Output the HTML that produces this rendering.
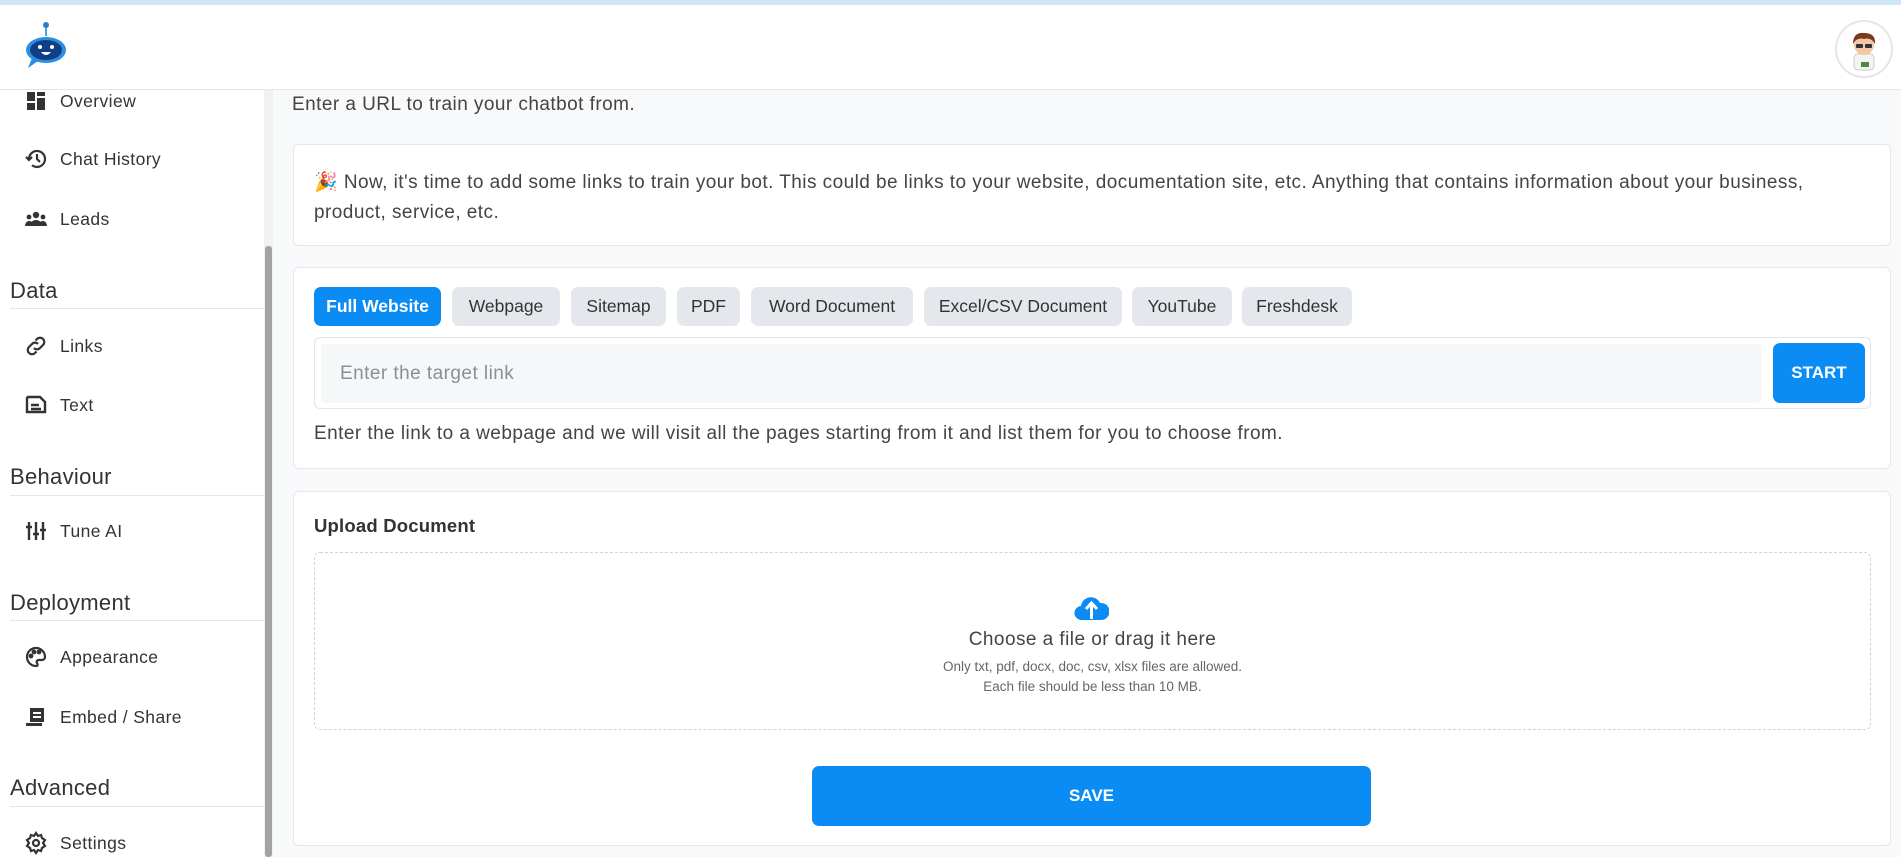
<!DOCTYPE html>
<html><head><meta charset="utf-8">
<style>
*{box-sizing:border-box;margin:0;padding:0}
body{width:1901px;height:857px;overflow:hidden;background:#f8f9fa;font-family:"Liberation Sans",sans-serif;color:#333;position:relative}
.topline{position:absolute;left:0;top:0;width:1901px;height:5px;background:#cfe6f7}
.header{position:absolute;left:0;top:5px;width:1901px;height:85px;background:#fff;border-bottom:1px solid #e5e7eb}
.sidebar{position:absolute;left:0;top:90px;width:264px;height:767px;background:#fff}
.sb-track{position:absolute;left:264px;top:90px;width:9px;height:767px;background:#f1f1f1}
.sb-thumb{position:absolute;left:265px;top:246px;width:7px;height:611px;background:#a3a3a3;border-radius:3px}
.item{position:absolute;left:24px;font-size:17.5px;letter-spacing:0.4px;color:#333;display:flex;align-items:center}
.item svg{width:24px;height:24px;margin-right:12px}
.head{position:absolute;left:10px;font-size:22px;color:#333;letter-spacing:0.3px}
.hline{position:absolute;left:10px;width:254px;height:1px;background:#e5e7eb}
.card{position:absolute;left:293px;width:1598px;background:#fff;border:1px solid #e3e6ea;border-radius:6px}
.tab{position:absolute;top:287px;height:39px;border-radius:7px;background:#e4e7eb;font-size:17.5px;color:#333;display:flex;align-items:center;justify-content:center}
.tab.a{background:#0b8cf5;color:#fff;font-weight:bold}
.t{letter-spacing:0.45px}
</style></head><body>
<div class="topline"></div>
<div class="header">
 <svg style="position:absolute;left:22px;top:15px" width="48" height="52" viewBox="0 0 48 52">
  <line x1="24" y1="4" x2="24" y2="16" stroke="#4aa3e0" stroke-width="2"/>
  <circle cx="24" cy="5" r="3" fill="#2a7fc9"/>
  <ellipse cx="24" cy="30" rx="20" ry="13" fill="#2b8fe0"/>
  <ellipse cx="24" cy="30" rx="16" ry="10" fill="#103f86"/>
  <path d="M10 38 L6 48 L16 41Z" fill="#2b8fe0"/>
  <circle cx="18" cy="27" r="2" fill="#fff"/><circle cx="30" cy="27" r="2" fill="#fff"/>
  <path d="M19 32 Q24 38 29 32Z" fill="#fff"/>
 </svg>
 <div style="position:absolute;left:1835px;top:15px;width:58px;height:58px;border-radius:50%;border:2px solid #e6e6e6;background:#fff;overflow:hidden">
  <svg width="54" height="54" viewBox="0 0 54 54">
   <rect x="17" y="32" width="20" height="16" rx="4" fill="#f3f3f3" stroke="#ccc"/>
   <circle cx="27" cy="23" r="10" fill="#f1c9a5"/>
   <path d="M16 22 Q16 10 27 11 Q39 11 38 22 Q34 15 27 17 Q20 15 16 22Z" fill="#7a3a1c"/>
   <rect x="19" y="22" width="7" height="4" rx="1" fill="#333"/><rect x="28" y="22" width="7" height="4" rx="1" fill="#333"/>
   <rect x="24" y="40" width="8" height="5" fill="#4b8b3b"/>
  </svg>
 </div>
</div>
<div class="sidebar">
 <div class="item" style="top:-1px"><svg viewBox="0 0 24 24"><path d="M3 3h8v9H3zM13 3h8v4h-8zM13 9h8v12h-8zM3 14h8v7H3z" fill="#333"/></svg>Overview</div>
 <div class="item" style="top:57px"><svg viewBox="0 0 24 24" fill="none" stroke="#333" stroke-width="2.2"><path d="M5 12a8 8 0 1 1 3 6.2"/><path d="M2 10l3 3 3-3"/><path d="M13 7v5l3 3"/></svg>Chat History</div>
 <div class="item" style="top:117px"><svg viewBox="0 0 24 24" fill="#333"><circle cx="12" cy="8" r="3.2"/><circle cx="5" cy="10" r="2.4"/><circle cx="19" cy="10" r="2.4"/><path d="M6 19c0-4 3-6 6-6s6 2 6 6z"/><path d="M1 19c0-3 2-5 4-5s3 1 3 1l-2 4z"/><path d="M23 19c0-3-2-5-4-5s-3 1-3 1l2 4z"/></svg>Leads</div>
 <div class="head" style="top:188px">Data</div><div class="hline" style="top:218px"></div>
 <div class="item" style="top:244px"><svg viewBox="0 0 24 24" fill="none" stroke="#333" stroke-width="2.2"><path d="M10 14a4 4 0 0 0 6 0l3-3a4 4 0 0 0-6-6l-1.5 1.5"/><path d="M14 10a4 4 0 0 0-6 0l-3 3a4 4 0 0 0 6 6l1.5-1.5"/></svg>Links</div>
 <div class="item" style="top:303px"><svg viewBox="0 0 24 24" fill="none" stroke="#333" stroke-width="2.4"><path d="M3 5v14h18V9l-5-5H4z"/><path d="M7 12h8M7 16h10"/></svg>Text</div>
 <div class="head" style="top:374px">Behaviour</div><div class="hline" style="top:405px"></div>
 <div class="item" style="top:429px"><svg viewBox="0 0 24 24" fill="none" stroke="#333" stroke-width="2.4"><path d="M5 3v18M12 3v18M19 3v18M2 8h6M9 15h6M16 11h6"/></svg>Tune AI</div>
 <div class="head" style="top:500px">Deployment</div><div class="hline" style="top:530px"></div>
 <div class="item" style="top:555px"><svg viewBox="0 0 24 24" fill="none" stroke="#333" stroke-width="2.2"><path d="M12 3a9 9 0 0 0 0 18c2 0 2-2 1-3s0-3 2-3h3a3 3 0 0 0 3-3c0-5-4-9-9-9z"/><circle cx="7" cy="11" r="1.3" fill="#333"/><circle cx="10" cy="7" r="1.3" fill="#333"/><circle cx="15" cy="7" r="1.3" fill="#333"/></svg>Appearance</div>
 <div class="item" style="top:615px"><svg viewBox="0 0 24 24" fill="#333"><path d="M6 3h14v14H6z"/><path d="M2 18h16v3H2z"/><rect x="9" y="7" width="8" height="2" fill="#fff"/><rect x="9" y="11" width="8" height="2" fill="#fff"/></svg>Embed / Share</div>
 <div class="head" style="top:685px">Advanced</div><div class="hline" style="top:716px"></div>
 <div class="item" style="top:741px"><svg viewBox="0 0 24 24" fill="none" stroke="#333" stroke-width="2.2"><circle cx="12" cy="12" r="3"/><path d="M12 2l2 3 3-1 1 3 3 2-2 3 2 3-3 2-1 3-3-1-2 3-2-3-3 1-1-3-3-2 2-3-2-3 3-2 1-3 3 1z"/></svg>Settings</div>
</div>
<div class="sb-track"></div><div class="sb-thumb"></div>

<div class="t" style="position:absolute;left:292px;top:94px;font-size:19px;color:#444">Enter a URL to train your chatbot from.</div>

<div class="card" style="top:144px;height:102px"></div>
<div class="t" style="position:absolute;left:314px;top:168px;width:1570px;font-size:19px;line-height:30px;color:#444;white-space:nowrap">🎉 Now, it's time to add some links to train your bot. This could be links to your website, documentation site, etc. Anything that contains information about your business,<br>product, service, etc.</div>

<div class="card" style="top:267px;height:202px"></div>
<div class="tab a" style="left:314px;width:127px">Full Website</div>
<div class="tab" style="left:452px;width:108px">Webpage</div>
<div class="tab" style="left:571px;width:95px">Sitemap</div>
<div class="tab" style="left:677px;width:63px">PDF</div>
<div class="tab" style="left:751px;width:162px">Word Document</div>
<div class="tab" style="left:924px;width:198px">Excel/CSV Document</div>
<div class="tab" style="left:1132px;width:100px">YouTube</div>
<div class="tab" style="left:1242px;width:110px">Freshdesk</div>
<div style="position:absolute;left:314px;top:337px;width:1557px;height:72px;border:1px solid #e3e6ea;border-radius:6px;background:#fff"></div>
<div class="t" style="position:absolute;left:321px;top:344px;width:1441px;height:59px;background:#f6f7f9;border-radius:4px;font-size:19px;color:#8a8f96;padding-left:19px;line-height:59px">Enter the target link</div>
<div style="position:absolute;left:1773px;top:343px;width:92px;height:60px;background:#0b8cf5;border-radius:7px;color:#fff;font-weight:bold;font-size:17px;display:flex;align-items:center;justify-content:center">START</div>
<div class="t" style="position:absolute;left:314px;top:423px;font-size:19px;color:#444">Enter the link to a webpage and we will visit all the pages starting from it and list them for you to choose from.</div>

<div class="card" style="top:491px;height:355px"></div>
<div style="position:absolute;left:314px;top:515px;font-size:18.5px;color:#333;font-weight:bold;letter-spacing:0.2px">Upload Document</div>
<div style="position:absolute;left:314px;top:552px;width:1557px;height:178px;border:1px dashed #cfd3d8;border-radius:6px"></div>
<svg style="position:absolute;left:1074px;top:592px" width="35" height="30" viewBox="0 0 35 30"><path d="M8 28a7 7 0 0 1-1-14 10 10 0 0 1 19-3 8 8 0 0 1 2 17z" fill="#0b8cf5"/><path d="M17.5 27V12M12 17l5.5-6 5.5 6" stroke="#fff" stroke-width="3" fill="none"/></svg>
<div class="t" style="position:absolute;left:314px;width:1557px;top:629px;text-align:center;font-size:19px;color:#444">Choose a file or drag it here</div>
<div style="position:absolute;left:314px;width:1557px;top:657px;text-align:center;font-size:13.5px;color:#666;line-height:20px">Only txt, pdf, docx, doc, csv, xlsx files are allowed.<br>Each file should be less than 10 MB.</div>
<div style="position:absolute;left:812px;top:766px;width:559px;height:60px;background:#0b8cf5;border-radius:7px;color:#fff;font-weight:bold;font-size:17px;display:flex;align-items:center;justify-content:center">SAVE</div>
</body></html>
